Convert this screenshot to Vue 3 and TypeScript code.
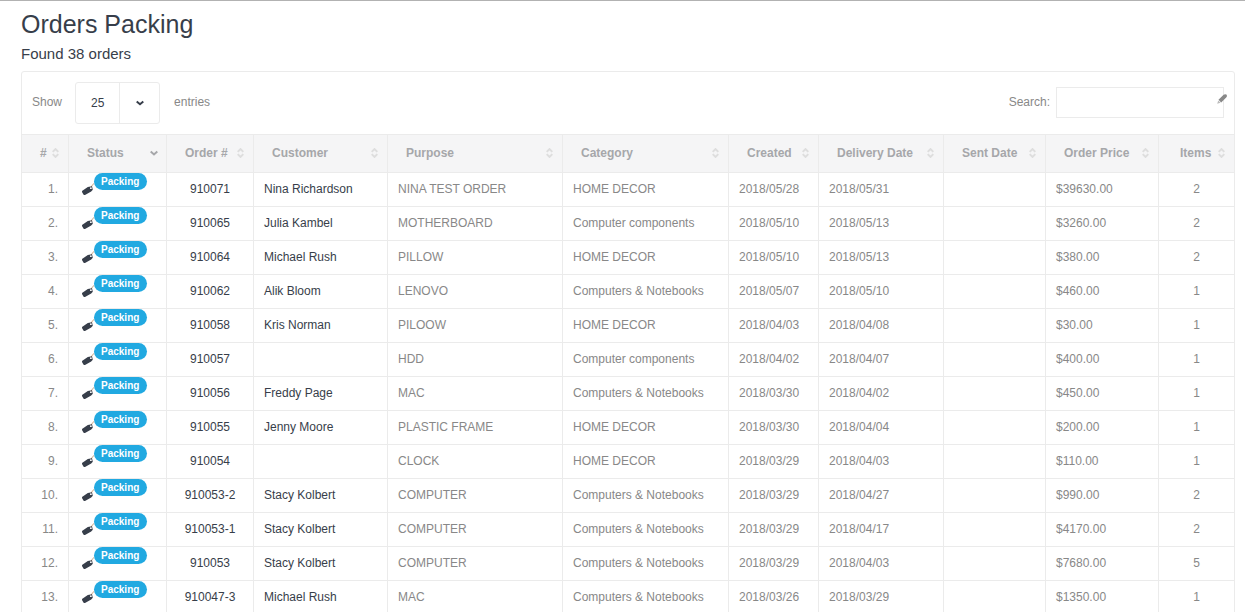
<script setup lang="ts">
import { ref } from 'vue'

interface Column {
  label: string
  width: number
  kind?: string
  sorted?: boolean
}

interface Order {
  id: string
  customer: string
  purpose: string
  category: string
  created: string
  delivery: string
  sent: string
  price: string
  items: number
}

const columns: Column[] = [
  { label: '#', width: 47 },
  { label: 'Status', width: 98, sorted: true },
  { label: 'Order #', width: 87 },
  { label: 'Customer', width: 134 },
  { label: 'Purpose', width: 175 },
  { label: 'Category', width: 166 },
  { label: 'Created', width: 90 },
  { label: 'Delivery Date', width: 125 },
  { label: 'Sent Date', width: 102 },
  { label: 'Order Price', width: 113 },
  { label: 'Items', width: 75, kind: 'last' },
]

const order = (
  id: string, customer: string, purpose: string, category: string,
  created: string, delivery: string, price: string, items: number,
): Order => ({ id, customer, purpose, category, created, delivery, sent: '', price, items })

const DECOR = 'HOME DECOR'
const PARTS = 'Computer components'
const NOTEBOOKS = 'Computers & Notebooks'

const orders: Order[] = [
  order('910071', 'Nina Richardson', 'NINA TEST ORDER', DECOR, '2018/05/28', '2018/05/31', '$39630.00', 2),
  order('910065', 'Julia Kambel', 'MOTHERBOARD', PARTS, '2018/05/10', '2018/05/13', '$3260.00', 2),
  order('910064', 'Michael Rush', 'PILLOW', DECOR, '2018/05/10', '2018/05/13', '$380.00', 2),
  order('910062', 'Alik Bloom', 'LENOVO', NOTEBOOKS, '2018/05/07', '2018/05/10', '$460.00', 1),
  order('910058', 'Kris Norman', 'PILOOW', DECOR, '2018/04/03', '2018/04/08', '$30.00', 1),
  order('910057', '', 'HDD', PARTS, '2018/04/02', '2018/04/07', '$400.00', 1),
  order('910056', 'Freddy Page', 'MAC', NOTEBOOKS, '2018/03/30', '2018/04/02', '$450.00', 1),
  order('910055', 'Jenny Moore', 'PLASTIC FRAME', DECOR, '2018/03/30', '2018/04/04', '$200.00', 1),
  order('910054', '', 'CLOCK', DECOR, '2018/03/29', '2018/04/03', '$110.00', 1),
  order('910053-2', 'Stacy Kolbert', 'COMPUTER', NOTEBOOKS, '2018/03/29', '2018/04/27', '$990.00', 2),
  order('910053-1', 'Stacy Kolbert', 'COMPUTER', NOTEBOOKS, '2018/03/29', '2018/04/17', '$4170.00', 2),
  order('910053', 'Stacy Kolbert', 'COMPUTER', NOTEBOOKS, '2018/03/29', '2018/04/03', '$7680.00', 5),
  order('910047-3', 'Michael Rush', 'MAC', NOTEBOOKS, '2018/03/26', '2018/03/29', '$1350.00', 1),
]

const pageSize = ref('25')
const search = ref('')
</script>

<template>
  <main class="page">
    <h1>Orders Packing</h1>
    <h2>Found 38 orders</h2>

    <section class="panel">
      <div class="toolbar">
        <label class="caption" for="page-size">Show</label>
        <div class="select">
          <select id="page-size" v-model="pageSize">
            <option>10</option>
            <option>25</option>
            <option>50</option>
          </select>
          <svg class="select-arrow" viewBox="0 0 8 6" width="8" height="6" aria-hidden="true">
            <path d="M.7 1.500 4 4.200 7.300 1.500" />
          </svg>
        </div>
        <span class="caption">entries</span>
        <label class="caption search-label" for="search">Search:</label>
        <div class="search">
          <input id="search" v-model="search" type="text" />
          <svg class="pencil" viewBox="0 0 10 10" width="10" height="10" aria-hidden="true">
            <path d="M1.500 5.800 6.600 .8Q8 -.4 9.400 .6 10.600 2 9.200 3.400L4.200 8.400Z" />
            <path d="M1.200 6.400 .2 9.800 3.600 8.800Z" class="tip" />
          </svg>
        </div>
      </div>

      <table>
        <colgroup>
          <col v-for="c in columns" :key="c.label" :style="{ width: c.width + 'px' }" />
        </colgroup>
        <thead>
          <tr>
            <th v-for="c in columns" :key="c.label" scope="col">
              <button type="button" :class="c.kind">
                <span>{{ c.label }}</span>
                <svg v-if="c.sorted" class="sorted" viewBox="0 0 8 6" width="8" height="6" aria-hidden="true">
                  <path d="M.7 1.500 4 4.400 7.300 1.500" />
                </svg>
                <svg v-else class="sort" viewBox="0 0 8 10" width="8" height="10" aria-hidden="true">
                  <path d="M.7 3.900 3.500 1.100 6.300 3.900M.7 6.100 3.500 8.900 6.300 6.100" />
                </svg>
              </button>
            </th>
          </tr>
        </thead>
        <tbody>
          <tr v-for="(o, i) in orders" :key="o.id">
            <td class="right">{{ i + 1 }}.</td>
            <td class="status">
              <div class="status-line">
                <svg class="tag" viewBox="0 0 12 12" width="12" height="12" aria-hidden="true">
                  <path d="M9.200 4.300Q9.800 2 12 .5" class="string" />
                  <path d="M0 8 5.800 4.100 10 3.200 10.800 6.700 9.200 8.400 3 12Q2 12.200 1.500 11.400L.1 9.200Z" />
                  <circle cx="8.900" cy="5.200" r=".9" class="hole" />
                </svg>
                <span class="badge">Packing</span>
              </div>
            </td>
            <td class="center dark">{{ o.id }}</td>
            <td class="dark">{{ o.customer }}</td>
            <td>{{ o.purpose }}</td>
            <td>{{ o.category }}</td>
            <td>{{ o.created }}</td>
            <td>{{ o.delivery }}</td>
            <td>{{ o.sent }}</td>
            <td>{{ o.price }}</td>
            <td class="center">{{ o.items }}</td>
          </tr>
        </tbody>
      </table>
    </section>
  </main>
</template>

<style>
body {
  margin: 0;
  background: #fff;
}
</style>

<style scoped>
.page {
  box-sizing: border-box;
  height: 100vh;
  overflow: hidden;
  padding: 8px 10px 0 21px;
  border-top: 1px solid #b2b2b2;
  color: #888;
  font: 12px/18px "Liberation Sans", Arial, sans-serif;
}

h1,
h2 {
  margin: 0;
  color: #373e4a;
  font-weight: 400;
}

h1 {
  font-size: 25px;
  line-height: 30px;
}

h2 {
  margin: 5px 0 7px;
  font-size: 15px;
  line-height: 20px;
}

.panel {
  border: 1px solid #ebebeb;
  border-radius: 3px 3px 0 0;
}

.toolbar {
  display: flex;
  align-items: center;
  padding: 10px;
}

.caption {
  padding-bottom: 2px;
}

.select {
  position: relative;
  margin: 0 14px 0 13px;
}

.select::after {
  content: "";
  position: absolute;
  top: 0;
  bottom: 0;
  right: 40px;
  border-left: 1px solid #ebebeb;
}

select {
  display: block;
  appearance: none;
  width: 85px;
  height: 42px;
  padding: 0 0 0 15px;
  border: 1px solid #ebebeb;
  border-radius: 3px;
  background: #fff;
  color: #373e4a;
  font: inherit;
}

.select-arrow {
  position: absolute;
  top: 18px;
  right: 16px;
}

svg path {
  fill: none;
}

.select-arrow path {
  stroke: #373e4a;
  stroke-width: 2;
}

.search-label {
  margin-left: auto;
}

.search {
  position: relative;
  margin: 0 0 2px 6px;
}

input {
  display: block;
  box-sizing: border-box;
  width: 168px;
  height: 31px;
  padding: 0 10px;
  border: 1px solid #ebebeb;
  background: #fff;
  color: #373e4a;
  font: inherit;
}

.pencil {
  position: absolute;
  top: 7px;
  right: -3px;
}

.pencil path {
  fill: #888;
}

.pencil .tip {
  fill: #bbb;
}

table {
  width: 100%;
  table-layout: fixed;
  border-collapse: separate;
  border-spacing: 0;
}

th,
td {
  padding: 0 10px 2px;
  border-right: 1px solid #ebebeb;
  border-bottom: 1px solid #ebebeb;
  text-align: left;
  white-space: nowrap;
}

th:last-child,
td:last-child {
  border-right: 0;
}

th {
  padding: 0;
  border-top: 1px solid #ebebeb;
  background: #f5f5f6;
}

th button {
  display: flex;
  align-items: center;
  justify-content: space-between;
  box-sizing: border-box;
  width: 100%;
  height: 37px;
  padding: 0 8px 2px 18px;
  border: 0;
  background: none;
  color: #a6a7aa;
  font: inherit;
  font-weight: 700;
}

th button.last {
  padding-left: 21px;
}

.sort path {
  stroke: #dedede;
  stroke-width: 2;
}

.sorted path {
  stroke: #a6a7aa;
  stroke-width: 2;
}

td {
  height: 31px;
}

.right {
  text-align: right;
}

.center {
  text-align: center;
}

.dark {
  color: #373e4a;
}

.status {
  padding: 0 0 0 13px;
  vertical-align: top;
}

.status-line {
  display: flex;
  align-items: flex-start;
}

.tag {
  margin-top: 10px;
}

.tag path {
  fill: #373e4a;
}

.tag .string {
  fill: none;
  stroke: #c9a27c;
}

.tag .hole {
  fill: #fff;
}

.badge {
  padding: 0 8px 0 7px;
  border-radius: 9px;
  background: #21a9e1;
  color: #fff;
  font-size: 10px;
  font-weight: 700;
  line-height: 17px;
}
</style>
